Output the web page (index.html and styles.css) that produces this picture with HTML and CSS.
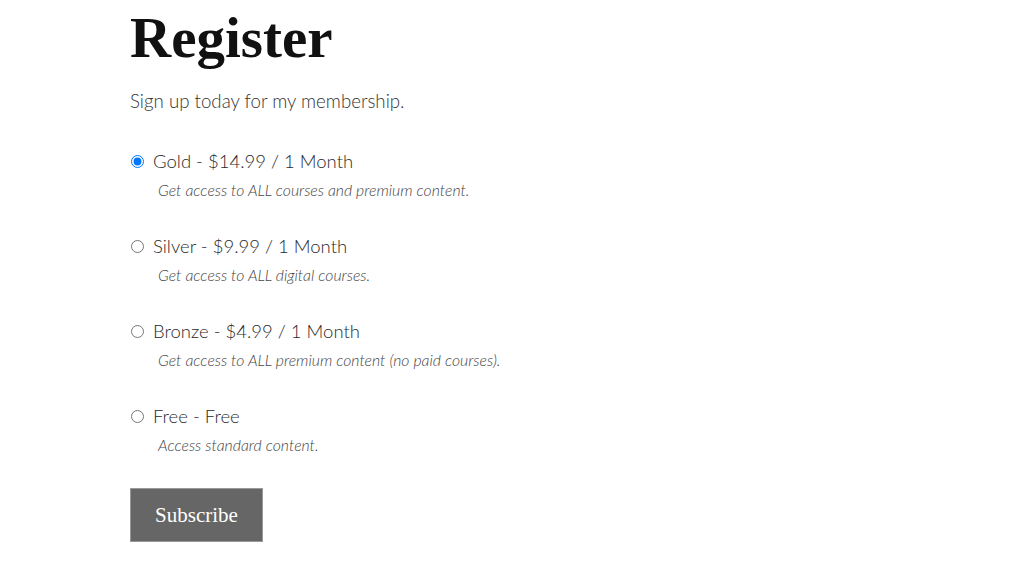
FILE: index.html
```html
<!DOCTYPE html>
<html lang="en">
<head>
    <meta charset="UTF-8">
    <meta name="viewport" content="width=device-width, initial-scale=1.0">
    <title>Register</title>
    <link rel="stylesheet" href="styles.css">
</head>
<body>
    <div class="register-container">
        <h1 class="title">Register</h1>
        <p class="intro">Sign up today for my membership.</p>
        <form id="registerForm">
            <div class="plan">
                <label class="plan-label">
                    <input type="radio" name="plan" value="gold" checked>
                    <span>Gold - $14.99 / 1 Month</span>
                </label>
                <p class="plan-desc">Get access to ALL courses and premium content.</p>
            </div>
            <div class="plan">
                <label class="plan-label">
                    <input type="radio" name="plan" value="silver">
                    <span>Silver - $9.99 / 1 Month</span>
                </label>
                <p class="plan-desc">Get access to ALL digital courses.</p>
            </div>
            <div class="plan">
                <label class="plan-label">
                    <input type="radio" name="plan" value="bronze">
                    <span>Bronze - $4.99 / 1 Month</span>
                </label>
                <p class="plan-desc">Get access to ALL premium content (no paid courses).</p>
            </div>
            <div class="plan">
                <label class="plan-label">
                    <input type="radio" name="plan" value="free">
                    <span>Free - Free</span>
                </label>
                <p class="plan-desc">Access standard content.</p>
            </div>
            <button type="submit">Subscribe</button>
        </form>
    </div>
</body>
</html>
```

FILE: styles.css
```css
body {
    font-family: Lato, "Liberation Sans", sans-serif;
    font-weight: 300;
    margin: 0;
    background-color: #fff;
    color: #333;
}
.register-container {
    padding: 8px 0 0 130px;
}
.title {
    font-family: "Liberation Serif", serif;
    font-weight: bold;
    font-size: 57px;
    line-height: 60px;
    margin: 0 0 22px;
    color: #111;
}
.intro {
    font-size: 18.7px;
    margin: 0 0 37px;
}
.plan {
    margin-bottom: 35px;
}
.plan:last-of-type {
    margin-bottom: 34px;
}
.plan-label {
    display: flex;
    align-items: center;
    font-size: 18.5px;
    line-height: 24px;
    color: #2a2a2a;
}
.plan-label input {
    margin: 0 9px 0 1px;
    width: 13px;
    height: 13px;
}
.plan-desc {
    font-style: italic;
    font-size: 15.8px;
    color: #444;
    margin: 7px 0 0 28px;
}
button {
    margin-top: 0;
    width: 133px;
    height: 54px;
    background-color: #666;
    border: 1px solid #999;
    color: #fff;
    font-family: "Liberation Serif", serif;
    font-size: 21px;
    cursor: pointer;
}
```
